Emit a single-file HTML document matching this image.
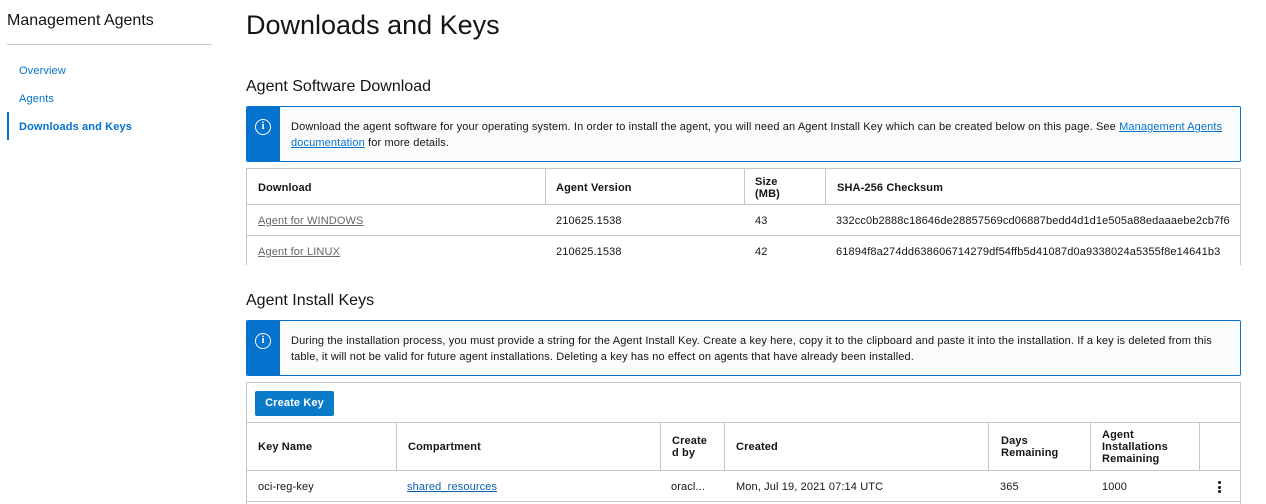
<!DOCTYPE html>
<html><head><meta charset="utf-8"><style>
*{box-sizing:border-box;margin:0;padding:0}
body{width:1266px;height:504px;overflow:hidden;background:#fff;font-family:"Liberation Sans",Arial,sans-serif;color:#161513;position:relative}
.a{position:absolute;white-space:nowrap}
.f11{font-size:11px;letter-spacing:0.13px;margin-top:1px}
.b{font-weight:bold}
.lnk{color:#666;text-decoration:underline}
.blue{color:#0572ce}
.bl{position:absolute;background:#c3c8cf}
.info{position:absolute;left:246px;width:995px;border:1px solid #0572ce;border-radius:2px;background:#fbfbfb;overflow:hidden}
.info .bar{position:absolute;left:0;top:0;bottom:0;width:33px;background:#0572ce}
.info .ic{position:absolute;left:8px;width:16px;height:16px;border:1.5px solid #fff;border-radius:50%;color:#fff;font-size:11px;font-weight:bold;text-align:center;line-height:13px;font-family:"Liberation Serif",serif}
.info p{position:absolute;left:44px;font-size:11px;letter-spacing:0.13px;line-height:16px;color:#161513;white-space:normal;right:22px}
</style></head><body>
<div class="a" style="left:7px;top:12px;font-size:16px">Management Agents</div>
<div class="bl" style="left:7px;top:44px;width:205px;height:1px"></div>
<div class="a f11 blue" style="left:19px;top:64px">Overview</div>
<div class="a f11 blue" style="left:19px;top:92px">Agents</div>
<div class="a" style="left:7px;top:112px;width:2px;height:28px;background:#0572ce"></div>
<div class="a f11 blue b" style="left:19px;top:120px">Downloads and Keys</div>

<div class="a" style="left:246px;top:10px;font-size:27px">Downloads and Keys</div>
<div class="a" style="left:246px;top:78px;font-size:16px">Agent Software Download</div>

<div class="info" style="top:106px;height:56px"><div class="bar"></div><div class="ic" style="top:12px">i</div>
<p style="top:12px;right:6px">Download the agent software for your operating system. In order to install the agent, you will need an Agent Install Key which can be created below on this page. See <span class="blue" style="text-decoration:underline">Management Agents</span><br><span class="blue" style="text-decoration:underline">documentation</span> for more details.</p></div>

<!-- table 1 -->
<div class="bl" style="left:246px;top:168px;width:995px;height:1px"></div>
<div class="bl" style="left:246px;top:204px;width:995px;height:1px"></div>
<div class="bl" style="left:246px;top:235px;width:995px;height:1px"></div>
<div class="bl" style="left:246px;top:168px;width:1px;height:97px"></div>
<div class="bl" style="left:1240px;top:168px;width:1px;height:97px"></div>
<div class="bl" style="left:545px;top:168px;width:1px;height:36px"></div>
<div class="bl" style="left:744px;top:168px;width:1px;height:36px"></div>
<div class="bl" style="left:825px;top:168px;width:1px;height:36px"></div>
<div class="a f11 b" style="left:258px;top:181px">Download</div>
<div class="a f11 b" style="left:556px;top:181px">Agent Version</div>
<div class="a f11 b" style="left:755px;top:175px;line-height:12px">Size<br>(MB)</div>
<div class="a f11 b" style="left:837px;top:181px">SHA-256 Checksum</div>
<div class="a f11 lnk" style="left:258px;top:214px">Agent for WINDOWS</div>
<div class="a f11" style="left:556px;top:214px">210625.1538</div>
<div class="a f11" style="left:755px;top:214px">43</div>
<div class="a f11" style="left:836px;top:214px">332cc0b2888c18646de28857569cd06887bedd4d1d1e505a88edaaaebe2cb7f6</div>
<div class="a f11 lnk" style="left:258px;top:245px">Agent for LINUX</div>
<div class="a f11" style="left:556px;top:245px">210625.1538</div>
<div class="a f11" style="left:755px;top:245px">42</div>
<div class="a f11" style="left:836px;top:245px">61894f8a274dd638606714279df54ffb5d41087d0a9338024a5355f8e14641b3</div>

<div class="a" style="left:246px;top:292px;font-size:16px">Agent Install Keys</div>
<div class="info" style="top:320px;height:56px"><div class="bar"></div><div class="ic" style="top:12px">i</div>
<p style="top:12px">During the installation process, you must provide a string for the Agent Install Key. Create a key here, copy it to the clipboard and paste it into the installation. If a key is deleted from this table, it will not be valid for future agent installations. Deleting a key has no effect on agents that have already been installed.</p></div>

<!-- table 2 -->
<div class="bl" style="left:246px;top:382px;width:995px;height:1px"></div>
<div class="bl" style="left:246px;top:422px;width:995px;height:1px"></div>
<div class="bl" style="left:246px;top:470px;width:995px;height:1px"></div>
<div class="bl" style="left:246px;top:501px;width:995px;height:1px"></div>
<div class="bl" style="left:246px;top:382px;width:1px;height:122px"></div>
<div class="bl" style="left:1240px;top:382px;width:1px;height:122px"></div>
<div class="bl" style="left:396px;top:422px;width:1px;height:48px"></div>
<div class="bl" style="left:660px;top:422px;width:1px;height:48px"></div>
<div class="bl" style="left:724px;top:422px;width:1px;height:48px"></div>
<div class="bl" style="left:988px;top:422px;width:1px;height:48px"></div>
<div class="bl" style="left:1090px;top:422px;width:1px;height:48px"></div>
<div class="bl" style="left:1199px;top:422px;width:1px;height:48px"></div>
<div class="a f11 b" style="left:255px;top:390px;width:79px;height:25px;background:#0a7bc8;color:#fff;border-radius:2px;text-align:center;line-height:25px">Create Key</div>
<div class="a f11 b" style="left:258px;top:440px">Key Name</div>
<div class="a f11 b" style="left:408px;top:440px">Compartment</div>
<div class="a f11 b" style="left:672px;top:434px;line-height:12px">Create<br>d by</div>
<div class="a f11 b" style="left:736px;top:440px">Created</div>
<div class="a f11 b" style="left:1001px;top:434px;line-height:12px">Days<br>Remaining</div>
<div class="a f11 b" style="left:1102px;top:428px;line-height:12px">Agent<br>Installations<br>Remaining</div>
<div class="a f11" style="left:258px;top:480px">oci-reg-key</div>
<div class="a f11" style="left:407px;top:480px;color:#0a5fb0;text-decoration:underline">shared_resources</div>
<div class="a f11" style="left:671px;top:480px">oracl...</div>
<div class="a f11" style="left:736px;top:480px">Mon, Jul 19, 2021 07:14 UTC</div>
<div class="a f11" style="left:1000px;top:480px">365</div>
<div class="a f11" style="left:1102px;top:480px">1000</div>
<div class="a" style="left:1218px;top:481px;width:3px">
<div style="width:3px;height:3px;background:#161513;border-radius:50%;margin-bottom:1.5px"></div>
<div style="width:3px;height:3px;background:#161513;border-radius:50%;margin-bottom:1.5px"></div>
<div style="width:3px;height:3px;background:#161513;border-radius:50%"></div></div>
</body></html>
